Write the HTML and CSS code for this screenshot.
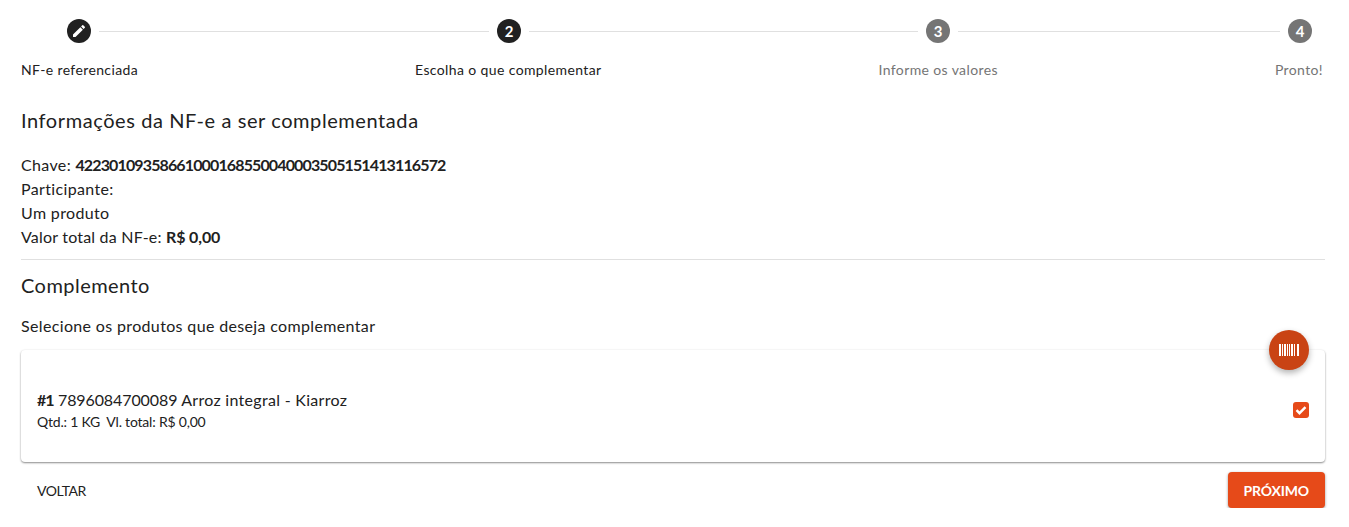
FILE: index.html
```html
<!DOCTYPE html>
<html lang="pt-br">
<head>
    <meta charset="UTF-8">
    <meta name="viewport" content="width=device-width, initial-scale=1.0">
    <title>Complementar NF-e</title>
    <link rel="stylesheet" href="styles.css">
</head>
<body>
    <div class="stepper">
        <div class="stepper-icons">
            <span class="step-icon">
                <svg viewBox="0 0 24 24" width="16" height="16"><path fill="#fff" d="M3 17.25V21h3.75L17.81 9.94l-3.75-3.75L3 17.25zM20.71 7.04a1 1 0 0 0 0-1.41l-2.34-2.34a1 1 0 0 0-1.41 0l-1.83 1.83 3.75 3.75 1.83-1.83z"/></svg>
            </span>
            <span class="step-line line-a"></span>
            <span class="step-icon">2</span>
            <span class="step-line line-b"></span>
            <span class="step-icon pending">3</span>
            <span class="step-line line-c"></span>
            <span class="step-icon pending">4</span>
        </div>
        <div class="stepper-labels">
            <span>NF-e referenciada</span>
            <span>Escolha o que complementar</span>
            <span class="pending-label">Informe os valores</span>
            <span class="pending-label">Pronto!</span>
        </div>
    </div>

    <h2 class="section-title">Informações da NF-e a ser complementada</h2>
    <div class="nfe-info">
        <div>Chave: <b class="nfe-key">42230109358661000168550040003505151413116572</b></div>
        <div>Participante:</div>
        <div>Um produto</div>
        <div class="nfe-total-row">Valor total da NF-e: <b class="nfe-total">R$ 0,00</b></div>
    </div>

    <hr class="divider">

    <h2 class="section-title complement-title">Complemento</h2>
    <p class="hint">Selecione os produtos que deseja complementar</p>

    <div class="product-card">
        <button class="fab" aria-label="Código de barras">
            <svg viewBox="0 0 20 12" width="20" height="12"><path fill="#fff" d="M0 0h2v12H0zM3 0h1v12H3zM5 0h2v12H5zM8 0h1v12H8zM10 0h1v12h-1zM12 0h2v12h-2zM15 0h1v12h-1zM18 0h2v12h-2z"/></svg>
        </button>
        <div class="product-text">
            <div class="product-name"><b class="product-index">#1</b> <span class="product-code">7896084700089</span> Arroz integral - Kiarroz</div>
            <div class="product-meta">Qtd.: 1 KG&nbsp; Vl. total: R$ 0,00</div>
        </div>
        <span class="checkbox">
            <svg viewBox="0 0 16 16" width="16" height="16"><path fill="none" stroke="#fff" stroke-width="2.4" d="M3.5 8.2l3 3 6-6"/></svg>
        </span>
    </div>

    <div class="actions">
        <button class="btn-back">VOLTAR</button>
        <button class="btn-next">PRÓXIMO</button>
    </div>
</body>
</html>
```

FILE: styles.css
```css
:root {
    --laranja: #e64a19;
    --preto: #212121;
    --cinza: #757575;
    --linha: #e0e0e0;
}

* {
    margin: 0;
    padding: 0;
    box-sizing: border-box;
}

body {
    background-color: #ffffff;
    color: var(--preto);
    font-family: Lato, sans-serif;
    font-size: 16px;
    padding: 19px 24px 0 21px;
}

.stepper-icons {
    display: flex;
    align-items: center;
    padding: 0 13px 0 46px;
}

.step-icon {
    width: 24px;
    height: 24px;
    border-radius: 50%;
    background-color: var(--preto);
    color: #ffffff;
    font-size: 15px;
    font-weight: bold;
    display: flex;
    align-items: center;
    justify-content: center;
    flex: none;
}

.step-icon.pending {
    background-color: var(--cinza);
}

.step-line {
    height: 1px;
    background-color: var(--linha);
    margin: 0 8px;
}

.line-a { flex: 390; }
.line-b { flex: 389; }
.line-c { flex: 322; }

.stepper-labels {
    display: flex;
    justify-content: space-between;
    padding-right: 2px;
    margin-top: 18px;
    font-size: 14px;
    line-height: 18px;
    letter-spacing: 0.38px;
}

.pending-label {
    color: var(--cinza);
}

.section-title {
    font-size: 20px;
    font-weight: 400;
    line-height: 28px;
    margin-top: 27px;
    letter-spacing: 0.58px;
}

.nfe-info {
    margin-top: 19px;
    line-height: 24px;
    letter-spacing: 0.35px;
}

.nfe-key {
    letter-spacing: -0.87px;
}

.nfe-total-row {
    letter-spacing: 0.2px;
}

.nfe-total {
    letter-spacing: -0.1px;
}

.divider {
    border: none;
    height: 1px;
    background-color: var(--linha);
    margin-top: 10px;
}

.complement-title {
    margin-top: 11px;
    letter-spacing: 0.45px;
}

.hint {
    margin-top: 15px;
    line-height: 24px;
    letter-spacing: 0.35px;
}

.product-card {
    position: relative;
    display: flex;
    align-items: center;
    justify-content: space-between;
    height: 112px;
    margin-top: 12px;
    padding: 0 16px;
    border-radius: 4px;
    background-color: #ffffff;
    box-shadow: 0 1px 2px rgba(0,0,0,0.45), 0 0 3px rgba(0,0,0,0.04);
}

.fab {
    position: absolute;
    top: -20px;
    right: 16px;
    width: 40px;
    height: 40px;
    border: none;
    border-radius: 50%;
    background-color: #c94314;
    display: flex;
    align-items: center;
    justify-content: center;
    box-shadow: 0 3px 6px rgba(0,0,0,0.3);
}

.product-text {
    padding-top: 8px;
}

.product-name {
    line-height: 24px;
    letter-spacing: 0.3px;
}

.product-index {
    letter-spacing: -1px;
}

.product-code {
    letter-spacing: -0.1px;
}

.product-meta {
    font-size: 14px;
    line-height: 20px;
    letter-spacing: -0.2px;
}

.checkbox {
    width: 16px;
    height: 16px;
    border-radius: 3px;
    background-color: var(--laranja);
    display: flex;
    margin-top: 8px;
}

.actions {
    display: flex;
    align-items: center;
    justify-content: space-between;
    margin-top: 10px;
}

.actions button {
    height: 36px;
    border: none;
    border-radius: 4px;
    padding: 0 16px;
    font-family: Lato, sans-serif;
    font-size: 14px;
    font-weight: bold;
}

.btn-back {
    background: none;
    color: var(--preto);
}

.actions .btn-back {
    font-weight: 400;
    letter-spacing: -0.5px;
}

.actions .btn-next {
    background-color: var(--laranja);
    color: #ffffff;
    letter-spacing: -0.15px;
    box-shadow: 0 1px 3px rgba(0,0,0,0.4);
}
```
